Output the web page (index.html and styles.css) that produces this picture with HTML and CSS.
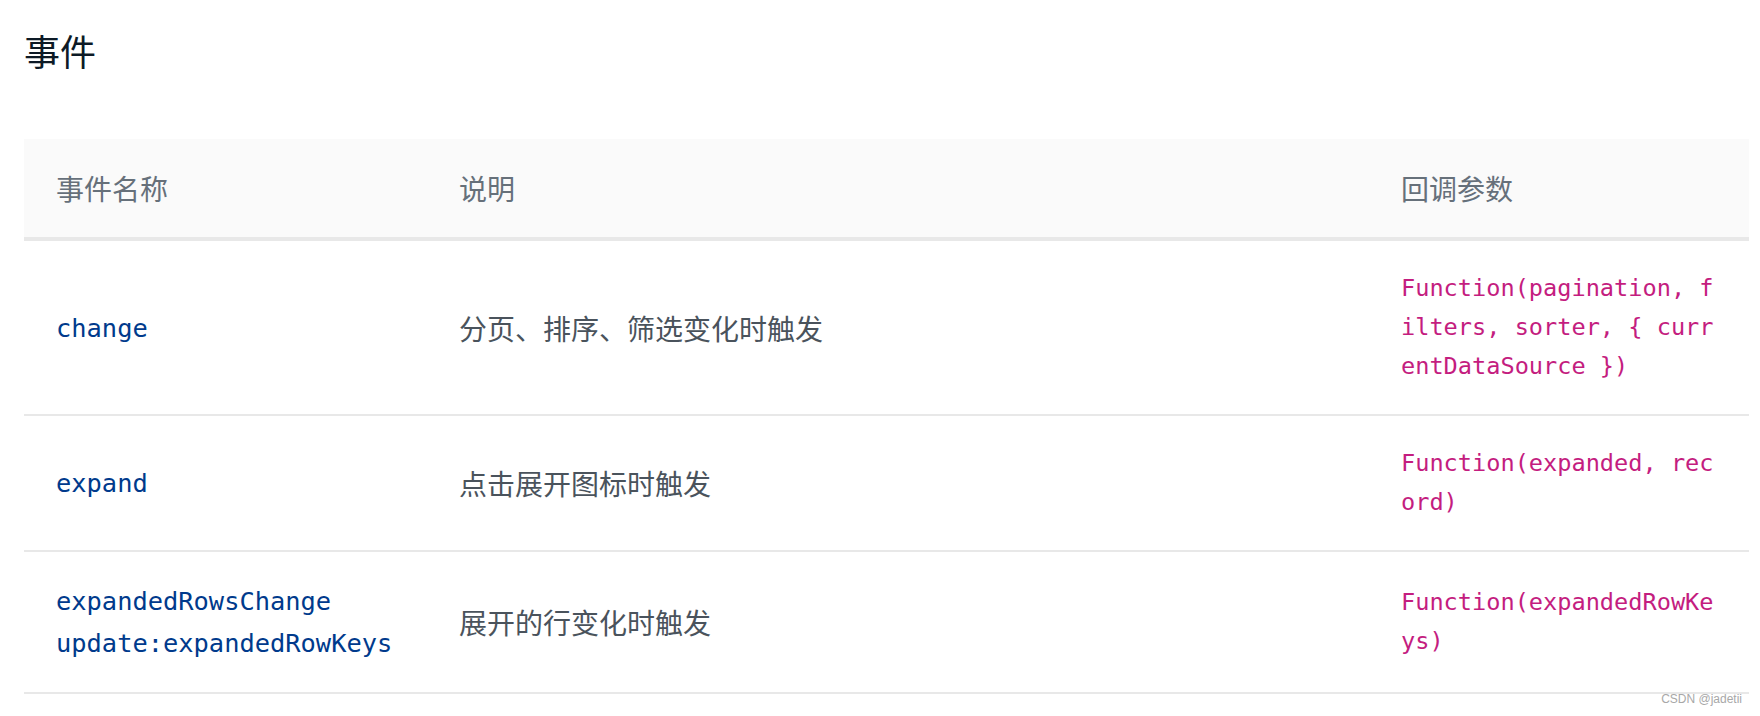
FILE: index.html
```
<!DOCTYPE html>
<html lang="zh-CN">
<head>
<meta charset="utf-8">
<title>事件</title>
<link rel="stylesheet" href="styles.css">
</head>
<body>
<div class="page">
  <h2 class="title">事件</h2>
  <table class="api">
    <colgroup>
      <col class="c-name">
      <col class="c-desc">
      <col class="c-args">
    </colgroup>
    <thead>
      <tr>
        <th>事件名称</th>
        <th>说明</th>
        <th>回调参数</th>
      </tr>
    </thead>
    <tbody>
      <tr>
        <td><code class="name">change</code></td>
        <td class="desc">分页、排序、筛选变化时触发</td>
        <td><code class="args">Function(pagination, filters, sorter, { currentDataSource })</code></td>
      </tr>
      <tr>
        <td><code class="name">expand</code></td>
        <td class="desc">点击展开图标时触发</td>
        <td><code class="args">Function(expanded, record)</code></td>
      </tr>
      <tr>
        <td><code class="name">expandedRowsChange</code><code class="name">update:expandedRowKeys</code></td>
        <td class="desc">展开的行变化时触发</td>
        <td><code class="args">Function(expandedRowKeys)</code></td>
      </tr>
    </tbody>
  </table>
  <div class="watermark">CSDN @jadetii</div>
</div>
</body>
</html>
```
FILE: styles.css
```
html, body {
  margin: 0;
  padding: 0;
  background: #ffffff;
}

body {
  font-family: "Noto Sans CJK SC", "Noto Sans", sans-serif;
}

.page {
  position: relative;
  min-height: 716px;
  padding: 26px 0 0 24px;
  box-sizing: border-box;
}

.title {
  margin: 0;
  font-size: 36px;
  line-height: 48px;
  font-weight: 400;
  color: #0d1a26;
}

.api {
  margin-top: 65px;
  width: 1725px;
  table-layout: fixed;
  border-collapse: separate;
  border-spacing: 0;
}

.c-name { width: 403px; }
.c-desc { width: 942px; }
.c-args { width: 380px; }

.api th {
  background: #fafafa;
  border-bottom: 4px solid #e8e8e8;
  padding: 28px 32px;
  text-align: left;
  font-weight: 400;
  font-size: 28px;
  line-height: 42px;
  color: #66707a;
}

.api td {
  padding: 28px 32px;
  border-bottom: 2px solid #e8e8e8;
  vertical-align: middle;
}

.desc {
  font-size: 28px;
  line-height: 42px;
  color: #4a535c;
}

.name {
  display: block;
  font-family: "DejaVu Sans Mono", monospace;
  font-size: 25.4px;
  line-height: 42px;
  color: #003a8c;
  white-space: nowrap;
}

.args {
  display: block;
  font-family: "DejaVu Sans Mono", monospace;
  font-size: 23.6px;
  line-height: 39px;
  color: #c41d7f;
  word-break: break-all;
}

.watermark {
  position: absolute;
  right: 18px;
  bottom: 10px;
  font-family: "Liberation Sans", Arial, sans-serif;
  font-size: 12px;
  line-height: 14px;
  color: #a8a8a8;
}
```
